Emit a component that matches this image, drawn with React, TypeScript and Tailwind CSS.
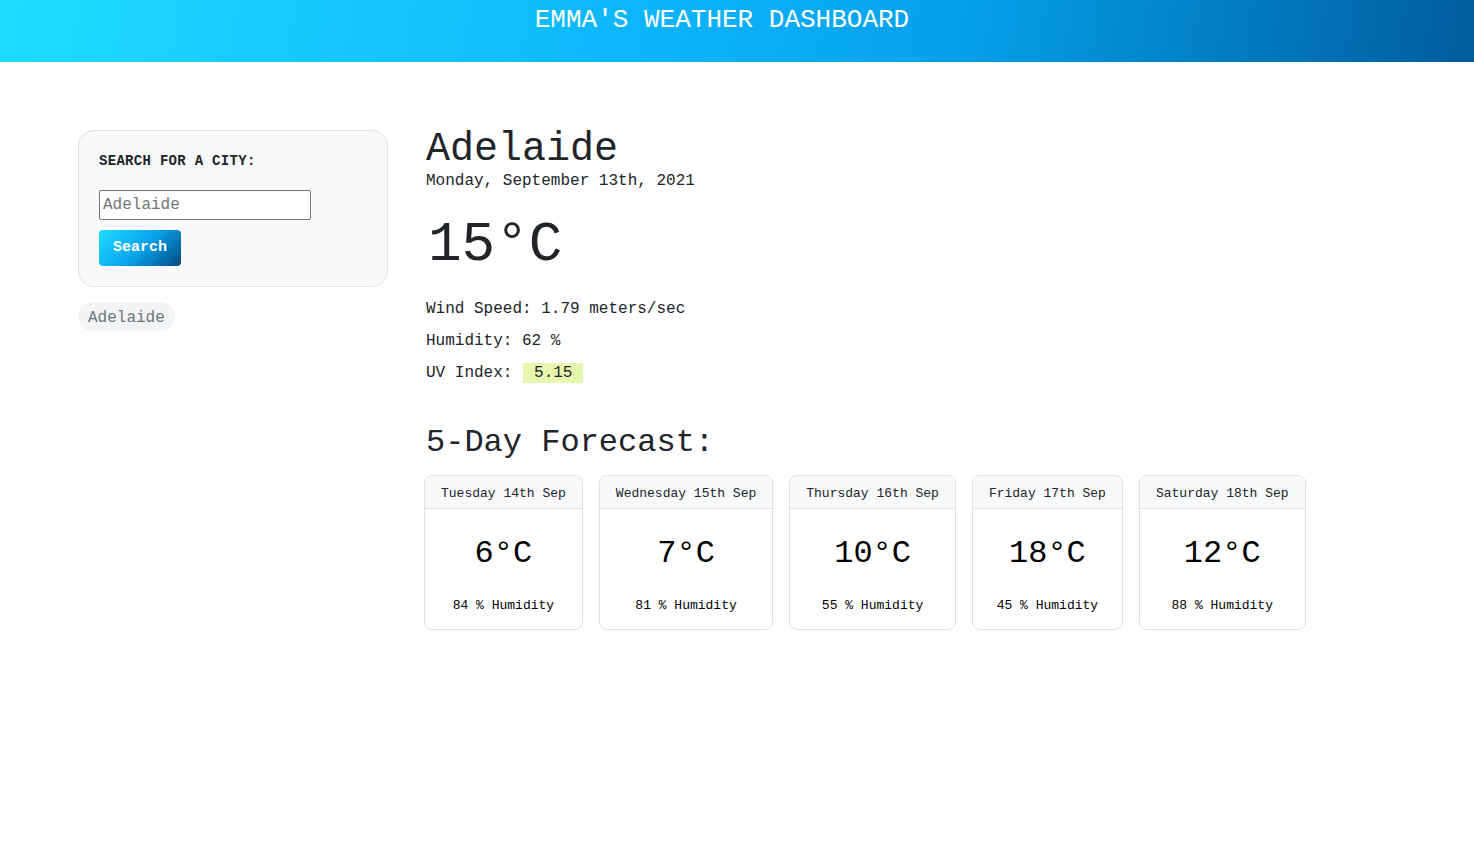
import React from "react";

interface Day {
  label: string;
  temp: string;
  humidity: number;
}

const days: Day[] = [
  { label: "Tuesday 14th Sep", temp: "6°C", humidity: 84 },
  { label: "Wednesday 15th Sep", temp: "7°C", humidity: 81 },
  { label: "Thursday 16th Sep", temp: "10°C", humidity: 55 },
  { label: "Friday 17th Sep", temp: "18°C", humidity: 45 },
  { label: "Saturday 18th Sep", temp: "12°C", humidity: 88 },
];

const mono = "font-['Liberation_Mono','Courier_New',monospace]";

export default function App() {
  return (
    <div className={`min-h-[846px] bg-white text-[#212529] ${mono}`}>
      <header className="h-[62px] bg-[linear-gradient(100deg,#1fdcff_0%,#0db4fb_45%,#05a0ea_65%,#005c9c_100%)] flex justify-center pt-[4px] pr-[30px]">
        <h1 className="text-white text-[26px] leading-[32px]">EMMA'S WEATHER DASHBOARD</h1>
      </header>

      <main className="flex pt-[68px] pl-[78px]">
        {/* left column */}
        <aside className="w-[310px] shrink-0">
          <div className="bg-[#f8f9fa] border border-[#dee2e6] rounded-[16px] px-[20px] pt-[20px] pb-[20px] h-[157px]">
            <h2 className="font-bold text-[14px] leading-[18px] tracking-[0.3px] mt-[1px]">SEARCH FOR A CITY:</h2>
            <input
              type="text"
              placeholder="Adelaide"
              className={`mt-[20px] block w-[212px] h-[30px] border border-[#767676] rounded-[2px] bg-white px-[3px] text-[16px] placeholder:text-[#757575] outline-none ${mono}`}
            />
            <button className="mt-[10px] w-[82px] h-[36px] rounded-[4px] text-white font-bold text-[15px] bg-[linear-gradient(135deg,#1fdcff_0%,#0aa6ef_50%,#004a80_100%)]">
              Search
            </button>
          </div>
          <div className="mt-[15px] inline-flex items-center h-[29px] pt-[2px] px-[10px] rounded-full bg-[#f3f4f5] text-[#6c757d] text-[16px]">
            Adelaide
          </div>
        </aside>

        {/* right column */}
        <section className="ml-[38px] flex-1">
          <h2 className="text-[40px] leading-[40px]">Adelaide</h2>
          <p className="text-[16px] leading-[20px] mt-[1px]">Monday, September 13th, 2021</p>
          <p className="text-[56px] leading-[64px] mt-[22px] ml-[2px]">15°C</p>
          <div className="mt-[22px] text-[16px] leading-[20px] flex flex-col gap-[12px]">
            <p>Wind Speed: 1.79 meters/sec</p>
            <p>Humidity: 62 %</p>
            <p>
              UV Index:{" "}
              <span className="inline-block ml-[1px] px-[11px] bg-[#e8f7ae]">5.15</span>
            </p>
          </div>

          <h3 className="text-[32px] leading-[40px] mt-[40px]">5-Day Forecast:</h3>
          <div className="flex gap-[16px] mt-[12px] ml-[-2px]">
            {days.map((d) => (
              <div key={d.label} className="border border-[#dee2e6] rounded-[8px] overflow-hidden bg-white h-[155px]">
                <div className="bg-[#f8f9fa] border-b border-[#dee2e6] h-[33px] flex items-center justify-center px-[16px] pt-[3px] text-[13px]">
                  {d.label}
                </div>
                <div className="flex flex-col items-center">
                  <p className="text-[32px] leading-[40px] mt-[25px] text-black">{d.temp}</p>
                  <p className="text-[13px] leading-[16px] mt-[24px] text-black">{d.humidity} % Humidity</p>
                </div>
              </div>
            ))}
          </div>
        </section>
      </main>
    </div>
  );
}
